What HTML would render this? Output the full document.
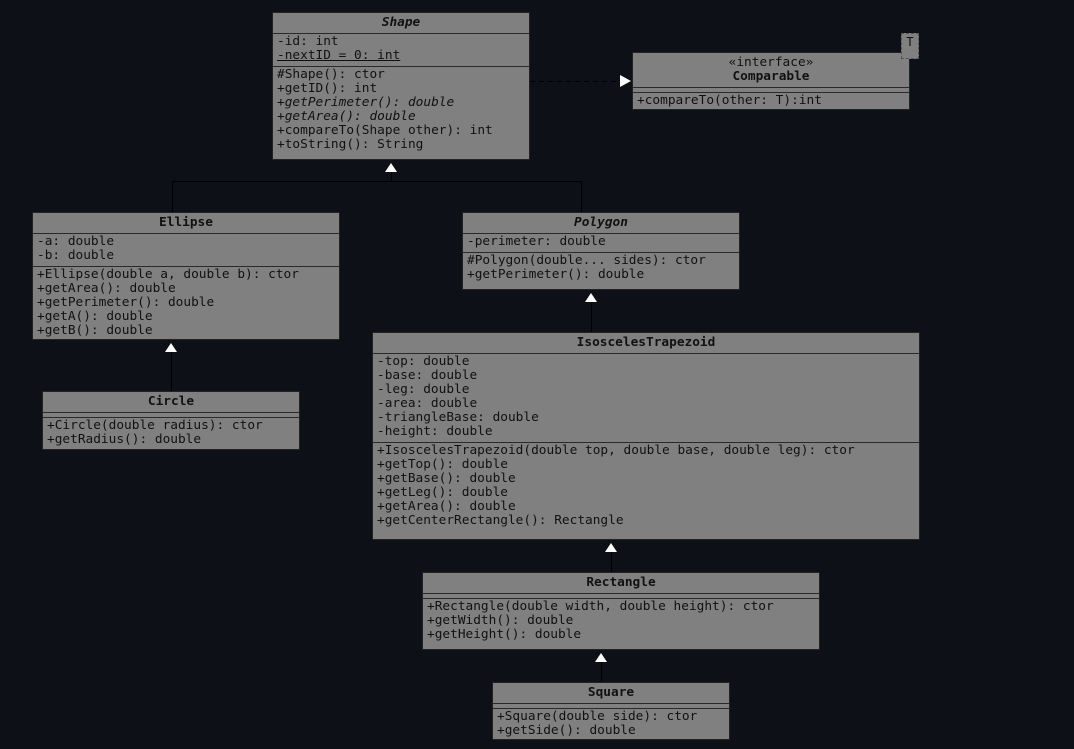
<!DOCTYPE html>
<html><head><meta charset="utf-8"><style>
body{margin:0;width:1074px;height:749px;background:#0d1017;position:relative;overflow:hidden;font-family:"DejaVu Sans Mono","Liberation Mono",monospace;font-size:12.8px;color:#111}
.box{position:absolute;background:#808080;border:1px solid #222;box-sizing:border-box}
.t{height:20px;line-height:20px;text-align:center;font-weight:bold;border-bottom:1px solid #2a2a2a}
.s{padding:1px 4px 3px;line-height:14px;border-bottom:1px solid #2a2a2a;white-space:pre}
.s:last-child{border-bottom:none}
.e{height:4px;padding:0}
i{font-style:italic}
u{text-decoration:underline}
svg{position:absolute;left:0;top:0}
</style></head><body>
<svg width="1074" height="749">
<g stroke="#000" stroke-width="1" fill="none">
<path d="M391.5 172V181.5H172.5V212M391.5 181.5H581.5V212"/>
<path d="M171.5 352V391"/>
<path d="M591.5 302V332"/>
<path d="M611.5 552V572"/>
<path d="M601.5 662V682"/>
<path d="M530 81.5H620" stroke-dasharray="5,4"/>
</g>
<g fill="#fff">
<path d="M391 163L397 172H385Z"/>
<path d="M171 343L177 352H165Z"/>
<path d="M591 293L597 302H585Z"/>
<path d="M611 543L617 552H605Z"/>
<path d="M601 653L607 662H595Z"/>
<path d="M631 81L620 75V87Z"/>
</g>
</svg>

<div class="box" style="left:272px;top:12px;width:258px;height:148px">
<div class="t"><i>Shape</i></div>
<div class="s">-id: int
<u>-nextID = 0: int</u></div>
<div class="s">#Shape(): ctor
+getID(): int
<i>+getPerimeter(): double</i>
<i>+getArea(): double</i>
+compareTo(Shape other): int
+toString(): String</div>
</div>

<div class="box" style="left:632px;top:52px;width:278px;height:58px">
<div class="t" style="height:35px;line-height:14px;padding-top:3px;box-sizing:border-box"><span style="font-weight:normal">«interface»</span><br>Comparable</div>
<div class="s e"></div>
<div class="s">+compareTo(other: T):int</div>
</div>
<div style="position:absolute;left:901px;top:33px;width:18px;height:26px;background:#808080;border:1px dashed #555;box-sizing:border-box;text-align:center;line-height:16px;font-size:12px">T</div>

<div class="box" style="left:32px;top:212px;width:308px;height:128px">
<div class="t">Ellipse</div>
<div class="s">-a: double
-b: double</div>
<div class="s">+Ellipse(double a, double b): ctor
+getArea(): double
+getPerimeter(): double
+getA(): double
+getB(): double</div>
</div>

<div class="box" style="left:462px;top:212px;width:278px;height:78px">
<div class="t"><i>Polygon</i></div>
<div class="s">-perimeter: double</div>
<div class="s">#Polygon(double... sides): ctor
+getPerimeter(): double</div>
</div>

<div class="box" style="left:42px;top:391px;width:258px;height:59px">
<div class="t">Circle</div>
<div class="s e"></div>
<div class="s">+Circle(double radius): ctor
+getRadius(): double</div>
</div>

<div class="box" style="left:372px;top:332px;width:548px;height:208px">
<div class="t">IsoscelesTrapezoid</div>
<div class="s">-top: double
-base: double
-leg: double
-area: double
-triangleBase: double
-height: double</div>
<div class="s">+IsoscelesTrapezoid(double top, double base, double leg): ctor
+getTop(): double
+getBase(): double
+getLeg(): double
+getArea(): double
+getCenterRectangle(): Rectangle</div>
</div>

<div class="box" style="left:422px;top:572px;width:398px;height:78px">
<div class="t">Rectangle</div>
<div class="s e"></div>
<div class="s">+Rectangle(double width, double height): ctor
+getWidth(): double
+getHeight(): double</div>
</div>

<div class="box" style="left:492px;top:682px;width:238px;height:58px">
<div class="t">Square</div>
<div class="s e"></div>
<div class="s">+Square(double side): ctor
+getSide(): double</div>
</div>
</body></html>
